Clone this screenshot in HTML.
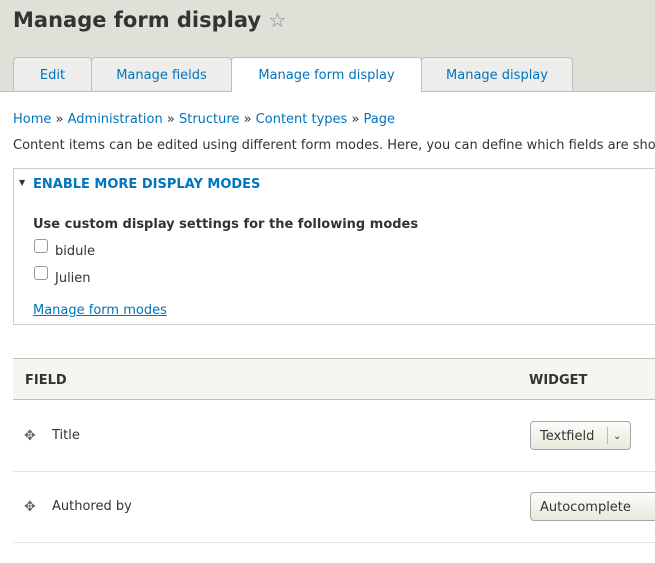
<!DOCTYPE html><html><head><style>
body{margin:0;width:655px;height:563px;overflow:hidden;font-family:"DejaVu Sans","Liberation Sans",sans-serif;color:#333;background:#fff;position:relative}
a{color:#0074bd;text-decoration:none}
.hdr{position:absolute;left:0;top:0;width:655px;height:91px;background:#e0e0d8;border-bottom:1px solid #bfbfba}
h1{position:absolute;left:13px;top:8px;margin:0;font-size:21px;font-weight:bold;color:#333}
h1 span{font-weight:normal;color:#888;font-size:20px}
.tab{position:absolute;top:57px;height:34px;background:#ededeb;border:1px solid #bfbfba;border-bottom:none;border-radius:4px 4px 0 0;font-size:13px;line-height:36px;text-align:center;color:#0074bd;box-sizing:border-box}
.abs{position:absolute}
.t{font-size:13px}
.box{position:absolute;left:13px;top:168px;width:660px;height:157px;border:1px solid #ccc;box-sizing:border-box}
.cb{position:absolute;left:34px;width:14px;height:14px;border:1px solid #999;border-radius:3px;background:#fff;box-sizing:border-box}
.th{position:absolute;left:13px;top:358px;width:660px;height:42px;background:#f5f5f2;border-top:1px solid #bfbfba;border-bottom:1px solid #bfbfba;box-sizing:border-box}
.sel{position:absolute;height:29px;border:1px solid #a6a6a6;border-radius:4px;background:linear-gradient(#fcfcfa,#e9e9dd);box-sizing:border-box;font-size:13px;line-height:27px;padding-left:9px;color:#333}
.line{position:absolute;left:13px;width:660px;height:1px;background:#e6e4df}
</style></head><body>
<div class="hdr"></div>
<h1>Manage form display <span>☆</span></h1>
<div class="tab" style="left:13px;width:79px">Edit</div>
<div class="tab" style="left:91px;width:141px">Manage fields</div>
<div class="tab" style="left:231px;width:191px;background:#fff;height:35px">Manage form display</div>
<div class="tab" style="left:421px;width:152px">Manage display</div>
<div class="abs t" style="left:13px;top:112px;color:#333"><a>Home</a> » <a>Administration</a> » <a>Structure</a> » <a>Content types</a> » <a>Page</a></div>
<div class="abs t" style="left:13px;top:138px;white-space:nowrap">Content items can be edited using different form modes. Here, you can define which fields are shown</div>
<div class="box"></div>
<div class="abs" style="left:19px;top:178px;font-size:8px">▼</div>
<div class="abs t" style="left:33px;top:177px;font-weight:bold;color:#0074bd">ENABLE MORE DISPLAY MODES</div>
<div class="abs t" style="left:33px;top:217px;font-weight:bold">Use custom display settings for the following modes</div>
<div class="cb" style="top:239px"></div><div class="abs t" style="left:55px;top:244px">bidule</div>
<div class="cb" style="top:266px"></div><div class="abs t" style="left:55px;top:271px">Julien</div>
<div class="abs t" style="left:33px;top:303px"><a style="text-decoration:underline">Manage form modes</a></div>
<div class="th"></div>
<div class="abs t" style="left:25px;top:373px;font-weight:bold">FIELD</div>
<div class="abs t" style="left:529px;top:373px;font-weight:bold">WIDGET</div>
<div class="abs" style="left:24px;top:428px;font-size:14px;color:#666">✥</div>
<div class="abs t" style="left:52px;top:428px">Title</div>
<div class="sel" style="left:530px;top:421px;width:101px;line-height:29px">Textfield<span style="position:absolute;left:76px;top:5px;height:17px;border-left:1px solid #bbb"></span><span style="position:absolute;left:82px;top:0;font-size:10px">⌄</span></div>
<div class="line" style="top:471px"></div>
<div class="abs" style="left:24px;top:499px;font-size:14px;color:#666">✥</div>
<div class="abs t" style="left:52px;top:499px">Authored by</div>
<div class="sel" style="left:530px;top:492px;width:140px;line-height:29px">Autocomplete</div>
<div class="line" style="top:542px"></div>
</body></html>
